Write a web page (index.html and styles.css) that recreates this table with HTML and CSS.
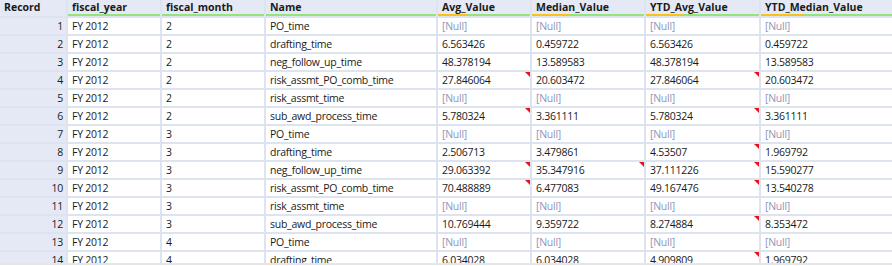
FILE: index.html
```html
<!DOCTYPE html>
<html lang="en">
<head>
  <meta charset="UTF-8">
  <title>Results - Record view</title>
  <link rel="stylesheet" href="styles.css">
</head>
<body>

<div class="viewport">
  <div class="grid">
    <!-- Header -->
    <div class="row head">
      <div class="cell rec"><span class="label">Record</span></div>
      <div class="cell"><span class="label">fiscal_year</span><div class="dq"></div></div>
      <div class="cell"><span class="label">fiscal_month</span><div class="dq"></div></div>
      <div class="cell"><span class="label">Name</span><div class="dq"></div></div>
      <div class="cell"><span class="label">Avg_Value</span><div class="dq" style="--null: 33%"></div></div>
      <div class="cell"><span class="label">Median_Value</span><div class="dq" style="--null: 33%"></div></div>
      <div class="cell"><span class="label">YTD_Avg_Value</span><div class="dq" style="--null: 33%"></div></div>
      <div class="cell"><span class="label">YTD_Median_Value</span><div class="dq" style="--null: 33%"></div></div>
    </div>

    <div class="row">
      <div class="cell rec">1</div><div class="cell">FY 2012</div><div class="cell">2</div><div class="cell">PO_time</div>
      <div class="cell null">[Null]</div><div class="cell null">[Null]</div><div class="cell null">[Null]</div><div class="cell null">[Null]</div>
    </div>
    <div class="row">
      <div class="cell rec">2</div><div class="cell">FY 2012</div><div class="cell">2</div><div class="cell">drafting_time</div>
      <div class="cell">6.563426</div><div class="cell">0.459722</div><div class="cell">6.563426</div><div class="cell">0.459722</div>
    </div>
    <div class="row">
      <div class="cell rec">3</div><div class="cell">FY 2012</div><div class="cell">2</div><div class="cell">neg_follow_up_time</div>
      <div class="cell">48.378194</div><div class="cell">13.589583</div><div class="cell">48.378194</div><div class="cell">13.589583</div>
    </div>
    <div class="row">
      <div class="cell rec">4</div><div class="cell">FY 2012</div><div class="cell">2</div><div class="cell">risk_assmt_PO_comb_time</div>
      <div class="cell trunc">27.846064</div><div class="cell">20.603472</div><div class="cell trunc">27.846064</div><div class="cell">20.603472</div>
    </div>
    <div class="row">
      <div class="cell rec">5</div><div class="cell">FY 2012</div><div class="cell">2</div><div class="cell">risk_assmt_time</div>
      <div class="cell null">[Null]</div><div class="cell null">[Null]</div><div class="cell null">[Null]</div><div class="cell null">[Null]</div>
    </div>
    <div class="row">
      <div class="cell rec">6</div><div class="cell">FY 2012</div><div class="cell">2</div><div class="cell">sub_awd_process_time</div>
      <div class="cell trunc">5.780324</div><div class="cell">3.361111</div><div class="cell trunc">5.780324</div><div class="cell">3.361111</div>
    </div>
    <div class="row">
      <div class="cell rec">7</div><div class="cell">FY 2012</div><div class="cell">3</div><div class="cell">PO_time</div>
      <div class="cell null">[Null]</div><div class="cell null">[Null]</div><div class="cell null">[Null]</div><div class="cell null">[Null]</div>
    </div>
    <div class="row">
      <div class="cell rec">8</div><div class="cell">FY 2012</div><div class="cell">3</div><div class="cell">drafting_time</div>
      <div class="cell">2.506713</div><div class="cell">3.479861</div><div class="cell trunc">4.53507</div><div class="cell">1.969792</div>
    </div>
    <div class="row">
      <div class="cell rec">9</div><div class="cell">FY 2012</div><div class="cell">3</div><div class="cell">neg_follow_up_time</div>
      <div class="cell trunc">29.063392</div><div class="cell trunc">35.347916</div><div class="cell trunc">37.111226</div><div class="cell">15.590277</div>
    </div>
    <div class="row">
      <div class="cell rec">10</div><div class="cell">FY 2012</div><div class="cell">3</div><div class="cell">risk_assmt_PO_comb_time</div>
      <div class="cell trunc">70.488889</div><div class="cell">6.477083</div><div class="cell trunc">49.167476</div><div class="cell">13.540278</div>
    </div>
    <div class="row">
      <div class="cell rec">11</div><div class="cell">FY 2012</div><div class="cell">3</div><div class="cell">risk_assmt_time</div>
      <div class="cell null">[Null]</div><div class="cell null">[Null]</div><div class="cell null">[Null]</div><div class="cell null">[Null]</div>
    </div>
    <div class="row">
      <div class="cell rec">12</div><div class="cell">FY 2012</div><div class="cell">3</div><div class="cell">sub_awd_process_time</div>
      <div class="cell">10.769444</div><div class="cell">9.359722</div><div class="cell trunc">8.274884</div><div class="cell">8.353472</div>
    </div>
    <div class="row">
      <div class="cell rec">13</div><div class="cell">FY 2012</div><div class="cell">4</div><div class="cell">PO_time</div>
      <div class="cell null">[Null]</div><div class="cell null">[Null]</div><div class="cell null">[Null]</div><div class="cell null">[Null]</div>
    </div>
    <div class="row">
      <div class="cell rec">14</div><div class="cell">FY 2012</div><div class="cell">4</div><div class="cell">drafting_time</div>
      <div class="cell">6.034028</div><div class="cell">6.034028</div><div class="cell trunc">4.909809</div><div class="cell">1.969792</div>
    </div>
  </div>
</div>

</body>
</html>
```

FILE: styles.css
```css
/* Reset */
html, body {
  margin: 0;
  padding: 0;
  background: #ffffff;
}

body {
  font-family: "Open Sans", "Noto Sans", sans-serif;
  font-size: 10.5px;
  color: #1a1a1a;
}

/* Visible part of the results grid */
.viewport {
  height: 263px;
  overflow: hidden;
  border-bottom: 2px solid #e6e6e6;
  background: #dde4f0;
}

.grid {
  display: grid;
  grid-template-columns: 66px 92px 102px 170px 92px 112px 113px 131px;
  grid-auto-rows: 16px;
  column-gap: 2px;
  row-gap: 2px;
}

.row {
  display: contents;
}

.cell {
  position: relative;
  background: #ffffff;
  padding-left: 4px;
  line-height: 16px;
  letter-spacing: -0.25px;
  white-space: nowrap;
  overflow: hidden;
}

/* Record number column */
.cell.rec {
  background: #e4e9f5;
  text-align: right;
  padding: 0 3px 0 0;
}

/* Header row */
.head .cell {
  background: #e4e9f5;
  font-weight: 700;
  letter-spacing: 0;
  display: flex;
  flex-direction: column;
  justify-content: space-between;
}

.head .cell.rec {
  padding: 0 0 0 4px;
  text-align: left;
}

.head .label {
  line-height: 14px;
}

/* Data quality bar under column names: yellow = nulls, green = ok */
.dq {
  --null: 0%;
  height: 2px;
  margin-left: -4px;
  background: linear-gradient(to right, #f6c21c var(--null), #93e57b var(--null));
}

.null {
  color: #9296b8;
}

/* Red corner mark for values shown with reduced precision */
.trunc::after {
  content: "";
  position: absolute;
  top: 0;
  right: 0;
  width: 0;
  height: 0;
  border-top: 5px solid #e8141c;
  border-left: 5px solid transparent;
}
```
